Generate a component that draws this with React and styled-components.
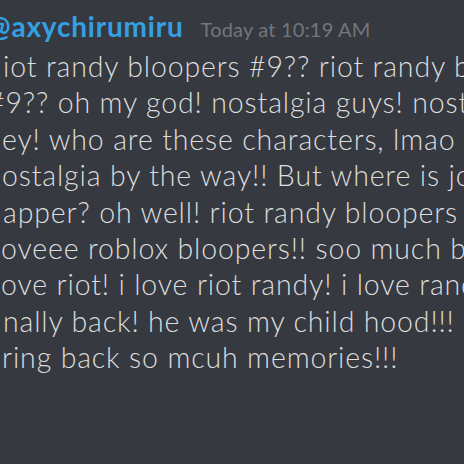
import styled, { createGlobalStyle } from 'styled-components';

const GlobalStyle = createGlobalStyle`
    html, body {
        margin: 0;
        padding: 0;
        background-color: #36393f;
        overflow: hidden;
    }
`;

const Chat = styled.div`
    width: 464px;
    height: 464px;
    overflow: hidden;
    background-color: #36393f;
    font-family: Lato, 'Open Sans', sans-serif;
    padding-top: 9px;
    box-sizing: border-box;
`;

const Header = styled.div`
    display: flex;
    align-items: baseline;
    gap: 17px;
    margin-left: -13px;
    height: 39px;
    white-space: nowrap;
`;

const Username = styled.span`
    color: #34a0e3;
    font-size: 28px;
    font-weight: 700;
    letter-spacing: 0.8px;
`;

const Timestamp = styled.span`
    color: #72767d;
    font-size: 20px;
    letter-spacing: 0.2px;
`;

const Content = styled.div`
    display: flex;
    flex-direction: column;
    color: #dcddde;
    font-size: 28.5px;
    font-weight: 300;
    letter-spacing: 0.85px;
    line-height: 36.4px;
`;

const Line = styled.div`
    white-space: nowrap;
    margin-left: ${p => p.$shift || 0}px;
`;

const lines = [
    ['iot randy bloopers #9?? riot randy bloopers', 3],
    ['#9?? oh my god! nostalgia guys! nostalgia', -12],
    ['ey! who are these characters, lmao', 2],
    ['ostalgia by the way!! But where is jojo', 2],
    ['apper? oh well! riot randy bloopers', 3],
    ['oveee roblox bloopers!! soo much bloopers', 1],
    ['ove riot! i love riot randy! i love randy', 1],
    ['nally back! he was my child hood!!!', 3],
    ['ring back so mcuh memories!!!', 2],
];

export default function App() {
    return (
        <>
            <GlobalStyle />
            <Chat>
                <Header>
                    <Username>@axychirumiru</Username>
                    <Timestamp>Today at 10:19 AM</Timestamp>
                </Header>
                <Content>
                    {lines.map(([text, shift], i) => (
                        <Line key={i} $shift={shift}>{text}</Line>
                    ))}
                </Content>
            </Chat>
        </>
    );
}
